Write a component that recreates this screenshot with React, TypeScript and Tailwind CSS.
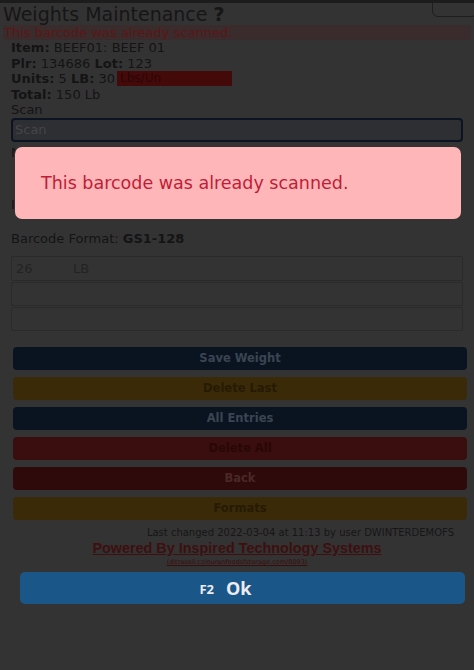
import React from "react";

const font = { fontFamily: '"DejaVu Sans", Verdana, sans-serif' };

function Btn({ label, className }: { label: string; className: string }) {
  return (
    <div
      className={`flex h-[23px] items-center justify-center rounded-[4px] text-[11.5px] font-bold ${className}`}
    >
      {label}
    </div>
  );
}

export default function App() {
  return (
    <div
      className="relative h-[670px] w-[474px] overflow-hidden bg-[#333333] text-[#141414]"
      style={font}
    >
      <div className="h-[3px] bg-[#1c1c1c]" />
      <div className="flex items-start justify-between pl-[3px]">
        <h1 className="text-[19px] leading-[22px] text-[#161616]">
          Weights Maintenance <span className="font-bold">?</span>
        </h1>
        <div className="-mt-[6px] mr-[-4px] h-[20px] w-[46px] rounded-[6px] border border-[#1e1e1e]" />
      </div>

      <div className="mx-[3px] h-[15px] rounded-[3px] bg-[#3a2c2c] pl-[1px] text-[13px] leading-[15px] text-[#5a1616]">
        This barcode was already scanned.
      </div>

      <div className="px-[11px] text-[13px] leading-[15.5px]">
        <div>
          <b>Item:</b> BEEF01: BEEF 01
        </div>
        <div>
          <b>Plr:</b> 134686 <b>Lot:</b> 123
        </div>
        <div className="flex items-center">
          <span>
            <b>Units:</b> 5 <b>LB:</b> 30
          </span>
          <span className="ml-[2px] h-[15px] w-[115px] bg-[#440a0a] pl-[3px] text-[12px] leading-[15px] text-[#2a0606]">
            Lbs/Un
          </span>
        </div>
        <div>
          <b>Total:</b> 150 Lb
        </div>
        <div>Scan</div>
        <div className="h-[24px] rounded-[4px] border-2 border-[#0b1420] bg-[#2d2f32] pl-[2px] text-[13px] leading-[20px] text-[#454545]">
          Scan
        </div>
        <div className="mt-[3px] h-[16px]">Manual Weight (LB)</div>
        <div className="mt-[36px] h-[16px]">Items</div>
        <div className="mt-[18px]">
          Barcode Format: <b>GS1-128</b>
        </div>
        <div className="mt-[10px] flex flex-col gap-[1px]">
          <div className="flex h-[25px] items-center rounded-[2px] border border-[#2a2a2a] pl-[4px] text-[#232323]">
            <span className="w-[57px]">26</span>
            <span>LB</span>
          </div>
          <div className="h-[24px] rounded-[2px] border border-[#2a2a2a]" />
          <div className="h-[24px] rounded-[2px] border border-[#2a2a2a]" />
        </div>
      </div>

      <div className="mt-[16px] flex flex-col gap-[7px] px-[13px] pr-[7px]">
        <Btn label="Save Weight" className="bg-[#0a1420] text-[#3a4452]" />
        <Btn label="Delete Last" className="bg-[#3a2a08] text-[#261a05]" />
        <Btn label="All Entries" className="bg-[#0a1420] text-[#3a4452]" />
        <Btn label="Delete All" className="bg-[#3a0e0e] text-[#280707]" />
        <Btn label="Back" className="bg-[#2e0a0a] text-[#4a2828]" />
        <Btn label="Formats" className="bg-[#3a2a08] text-[#261a05]" />
      </div>

      <div className="mt-[7px] pr-[20px] text-right text-[10px] leading-[12px] text-[#161616]">
        Last changed 2022-03-04 at 11:13 by user DWINTERDEMOFS
      </div>
      <div
        className="text-center text-[14.4px] font-bold leading-[18px] text-[#3e0f0f] underline"
        style={{ fontFamily: '"Liberation Sans", Arial, sans-serif' }}
      >
        Powered By Inspired Technology Systems
      </div>
      <div className="text-center text-[6.5px] leading-[10px] text-[#3a0d0d] underline">
        (ditrasoil.cz/ouranfoodsfstorage.com/8093)
      </div>

      <div className="absolute left-[15px] top-[147px] flex h-[72px] w-[446px] items-center rounded-[7px] bg-[#ffb6b9] pl-[26px] text-[17.5px] text-[#c01c36]">
        This barcode was already scanned.
      </div>

      <div
        className="absolute left-[20px] top-[572px] flex h-[32px] w-[445px] items-center justify-center gap-[12px] rounded-[5px] bg-[#1b5688] text-[#ececf2]"
        style={{ fontFamily: '"Open Sans", "Noto Sans", sans-serif' }}
      >
        <span className="mt-[3px] text-[13px] font-bold">F2</span>
        <span className="text-[18px] font-bold">Ok</span>
        <span className="invisible mt-[3px] w-[22px] text-[13px] font-bold">F2</span>
      </div>
    </div>
  );
}
